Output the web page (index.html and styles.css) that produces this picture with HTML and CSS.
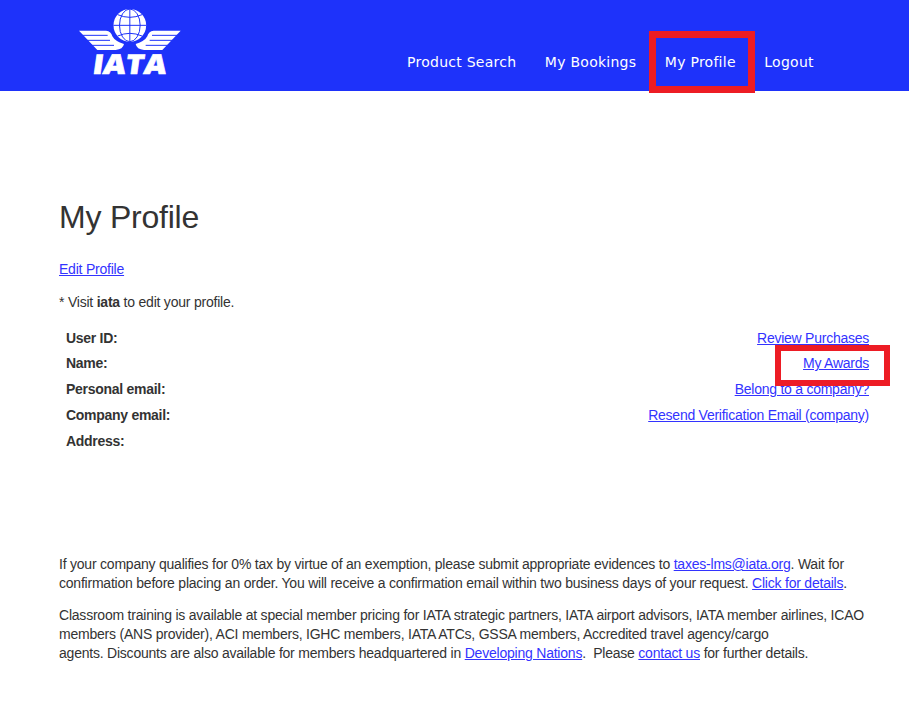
FILE: index.html
```html
<!DOCTYPE html>
<html lang="en">
<head>
    <meta charset="UTF-8">
    <meta name="viewport" content="width=device-width, initial-scale=1.0">
    <title>My Profile</title>
    <link rel="stylesheet" href="styles.css">
</head>
<body>
    <header class="header">
        <a href="#" class="logo">
            <svg viewBox="0 0 360 273" width="120" height="91" aria-label="IATA">
                <!-- Wings -->
                <g class="logoFill">
                    <path d="M27 92 H108 Q124 94 127 109 Q135 124 162 132 Q159 148 137 150 H82 Z"/>
                    <path d="M332 92 H251 Q235 94 232 109 Q224 124 197 132 Q200 148 222 150 H277 Z"/>
                </g>
                <g class="logoGap">
                    <path d="M30 106 H113 M46 121 H120 M60 136 H132"/>
                    <path d="M329 106 H246 M313 121 H239 M299 136 H227"/>
                </g>
                <!-- Globe -->
                <circle class="logoFill" cx="179.500" cy="76" r="49"/>
                <g class="logoGap">
                    <path d="M179.500 27 V125 M130 76 H229"/>
                    <ellipse cx="179.500" cy="76" rx="31" ry="49"/>
                    <path d="M143 44 Q179.500 60 216 44 M143 108 Q179.500 92 216 108"/>
                </g>
                <text class="logoText" x="65" y="221" transform="translate(31 0) skewX(-8)" textLength="221" lengthAdjust="spacingAndGlyphs">IATA</text>
            </svg>
        </a>
        <nav class="nav">
            <a href="#">Product Search</a>
            <a href="#">My Bookings</a>
            <a href="#" class="marked">My Profile</a>
            <a href="#">Logout</a>
        </nav>
    </header>

    <main class="container">
        <h1>My Profile</h1>
        <p class="edit"><a href="#">Edit Profile</a></p>
        <p class="visit">* Visit <b>iata</b> to edit your profile.</p>

        <section class="profile">
            <ul class="fields">
                <li>User ID:</li>
                <li>Name:</li>
                <li>Personal email:</li>
                <li>Company email:</li>
                <li>Address:</li>
            </ul>
            <ul class="actions">
                <li><a href="#">Review Purchases</a></li>
                <li><a href="#" class="marked">My Awards</a></li>
                <li><a href="#">Belong to a company?</a></li>
                <li><a href="#">Resend Verification Email (company)</a></li>
            </ul>
        </section>

        <section class="notes">
            <p>If your company qualifies for 0% tax by virtue of an exemption, please submit appropriate evidences to <a href="#">taxes-lms@iata.org</a>. Wait for<br>
            confirmation before placing an order. You will receive a confirmation email within two business days of your request. <a href="#">Click for details</a>.</p>
            <p>Classroom training is available at special member pricing for IATA strategic partners, IATA airport advisors, IATA member airlines, ICAO<br>
            members (ANS provider), ACI members, IGHC members, IATA ATCs, GSSA members, Accredited travel agency/cargo<br>
            agents. Discounts are also available for members headquartered in <a href="#">Developing Nations</a>.&nbsp; Please <a href="#">contact us</a> for further details.</p>
        </section>
    </main>
</body>
</html>
```
FILE: styles.css
```css
body {
    font-family: Arial, 'Liberation Sans', sans-serif;
    font-size: 14px;
    letter-spacing: -0.22px;
    line-height: 19px;
    background-color: #fff;
    color: #333;
    margin: 0;
}
a {
    color: #3333ff;
}
.header {
    display: flex;
    height: 91px;
    background-color: #1e32fa;
}
.logo {
    display: block;
    width: 120px;
    height: 91px;
    margin-left: 70px;
}
.logo svg {
    display: block;
}
.logoFill {
    fill: #fff;
}
.logoGap {
    fill: none;
    stroke: #1e32fa;
    stroke-width: 3;
}
.logoText {
    fill: #fff;
    stroke: #fff;
    stroke-width: 2;
    font-family: 'Open Sans', 'Noto Sans', sans-serif;
    font-size: 82px;
    font-weight: 800;
    letter-spacing: 0;
}
.nav {
    display: flex;
    gap: 28.5px;
    margin-left: 217px;
    padding-top: 52px;
}
.nav a {
    font-family: Verdana, 'DejaVu Sans', sans-serif;
    font-size: 14px;
    letter-spacing: 0.26px;
    line-height: 20px;
    color: #fff;
    text-decoration: none;
    white-space: nowrap;
}
/* Red highlight frames */
.marked {
    position: relative;
}
.marked::after {
    content: '';
    position: absolute;
    box-sizing: border-box;
    border: 7px solid #ed1c24;
    top: -21px;
    left: -16px;
    width: 106px;
    height: 62px;
}
.actions .marked::after {
    border-width: 6px;
    top: -10px;
    left: auto;
    right: -21px;
    width: 115px;
    height: 41px;
}
.container {
    width: 810px;
    margin-left: 59px;
    padding-top: 106px;
}
h1 {
    font-size: 32px;
    font-weight: normal;
    line-height: 40px;
    margin: 0;
}
p {
    margin: 0 0 13px;
    white-space: nowrap;
}
.edit {
    margin: 23px 0 14px;
}
.profile {
    display: flex;
    justify-content: space-between;
    height: 226.4px;
    padding-top: 3.6px;
}
.fields, .actions {
    list-style: none;
    margin: 0;
    padding: 0;
}
.fields {
    padding-left: 7px;
    font-weight: bold;
    letter-spacing: -0.28px;
}
.fields li, .actions li {
    height: 25.8px;
    line-height: 19px;
}
.actions {
    text-align: right;
    letter-spacing: -0.25px;
}
```
